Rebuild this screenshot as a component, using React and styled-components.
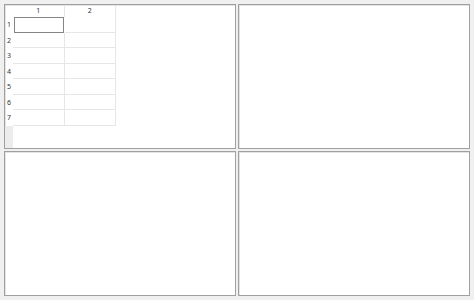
import React from 'react';
import styled, {createGlobalStyle} from 'styled-components';

const GlobalStyle = createGlobalStyle`
  html, body {
    margin: 0;
    padding: 0;
    background: #f0f0f0;
  }
  body {
    font-family: "Noto Sans", "DejaVu Sans", sans-serif;
  }
`;

const App = () => {
    const rows = [1, 2, 3, 4, 5, 6, 7];
    const cols = [1, 2];

    return (
        <>
            <GlobalStyle/>
            <Window>
                <Panel>
                    <Sheet>
                        <HeaderRow>
                            <Corner/>
                            {cols.map(c => <ColHead key={c}>{c}</ColHead>)}
                        </HeaderRow>
                        {rows.map(r =>
                            <Row key={r}>
                                <RowHead>{r}</RowHead>
                                {cols.map(c =>
                                    <Cell key={c} $selected={r === 1 && c === 1}/>
                                )}
                            </Row>
                        )}
                        <Filler/>
                    </Sheet>
                </Panel>
                <Panel/>
                <Panel/>
                <Panel/>
            </Window>
        </>
    )
}

const Window = styled.div`
  box-sizing: border-box;
  width: 474px;
  height: 300px;
  padding: 4px 4px 4px 4px;
  display: grid;
  grid-template-columns: 1fr 1fr;
  grid-template-rows: 1fr 1fr;
  gap: 2px;
  background: #f0f0f0;
`;

const Panel = styled.div`
  background: #fff;
  border: 1px solid #a0a0a0;
  box-shadow: inset 1px 1px 0 #e3e3e3;
  overflow: hidden;
  display: flex;
`;

const Sheet = styled.div`
  display: flex;
  flex-direction: column;
`;

const HeaderRow = styled.div`
  display: flex;
  height: 12px;
`;

const Corner = styled.div`
  width: 8px;
`;

const ColHead = styled.div`
  box-sizing: border-box;
  width: 51.5px;
  font-size: 7px;
  line-height: 12px;
  text-align: center;
  color: #333;
  border-right: 1px solid #e6e6e6;
`;

const Row = styled.div`
  display: flex;
  height: 15.5px;
`;

const RowHead = styled.div`
  box-sizing: border-box;
  width: 8px;
  font-size: 7px;
  line-height: 15px;
  padding-left: 2px;
  color: #333;
`;

const Cell = styled.div`
  box-sizing: border-box;
  width: 51.5px;
  border-right: 1px solid #e6e6e6;
  border-bottom: 1px solid #e6e6e6;
  ${p => p.$selected && `
    border: 1px solid #858585;
    margin: 0 1px 0 1px;
    width: 49.5px;
  `}
`;

const Filler = styled.div`
  flex: 1;
  width: 8px;
  background: #ececec;
`;

export default App;
